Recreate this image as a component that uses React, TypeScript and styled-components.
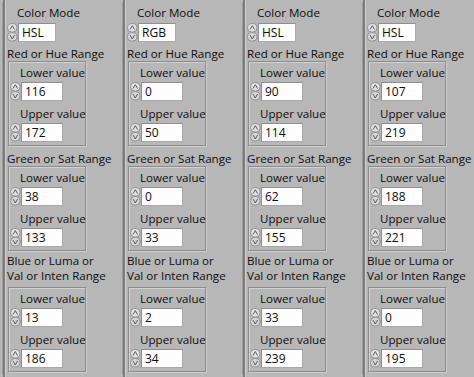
import React from "react";
import styled, { createGlobalStyle } from "styled-components";

const Global = createGlobalStyle`
  html, body { margin: 0; padding: 0; background: #b7b7b7; }
  body { font-family: "Open Sans", "Liberation Sans", Arial, sans-serif; color: #0e0e0e; }
`;

const Page = styled.div`
  width: 474px;
  height: 377px;
  overflow: hidden;
  background: #b7b7b7;
  display: flex;
  padding-left: 3px;
  box-sizing: border-box;
`;

const Column = styled.div`
  flex: 0 0 120px;
  width: 120px;
  box-sizing: border-box;
  border-left: 2px solid #7c7c7c;
  box-shadow: inset 1px 0 0 #d0d0d0, -3px 0 0 -2px #9a9a9a;
  padding-top: 6px;
  display: flex;
  flex-direction: column;
  overflow: hidden;
`;

const ModeLabel = styled.div`
  font-size: 11.6px;
  line-height: 14px;
  padding-left: 12px;
  white-space: nowrap;
`;

const SectionLabel = styled.div<{ $top: number }>`
  font-size: 11.6px;
  line-height: 15px;
  padding-left: 2px;
  margin-top: ${(p) => p.$top}px;
  white-space: nowrap;
`;

const Cluster = styled.div<{ $top: number }>`
  margin-top: ${(p) => p.$top}px;
  margin-left: 3px;
  width: 78px;
  height: 85px;
  box-sizing: border-box;
  border: 1px solid #8c8c8c;
  box-shadow: inset 1px 1px 0 #d2d2d2, 1px 1px 0 #cfcfcf;
  padding-top: 4px;
  display: flex;
  flex-direction: column;
`;

const ValueLabel = styled.div<{ $top: number }>`
  font-size: 11.6px;
  line-height: 14px;
  padding-left: 11px;
  margin-top: ${(p) => p.$top}px;
  white-space: nowrap;
`;

const NumRow = styled.div<{ $top: number; $left: number }>`
  display: flex;
  align-items: stretch;
  height: 19px;
  margin-top: ${(p) => p.$top}px;
  margin-left: ${(p) => p.$left}px;
`;

const Spin = styled.svg`
  width: 11px;
  height: 19px;
  flex: 0 0 11px;
  display: block;
`;

const Box = styled.div<{ $w: number }>`
  width: ${(p) => p.$w}px;
  height: 19px;
  box-sizing: border-box;
  background: #fdfdfd;
  border: 1px solid #a9a9a9;
  border-top-color: #8f8f8f;
  border-left-color: #8f8f8f;
  font-size: 12px;
  line-height: 17px;
  padding-left: 3px;
  font-family: "Open Sans", "Liberation Sans", Arial, sans-serif;
`;

function Spinner() {
  return (
    <Spin viewBox="0 0 11 19">
      <rect x="0.5" y="0.5" width="9.5" height="8.5" rx="4" fill="#e2e2e2" stroke="#939393" />
      <rect x="0.5" y="9.5" width="9.5" height="8.5" rx="4" fill="#d6d6d6" stroke="#939393" />
      <path d="M3 6.6 L5.3 2.6 L7.6 6.6" fill="none" stroke="#5a5a5a" strokeWidth="1" />
      <path d="M3 12 L5.3 16 L7.6 12" fill="none" stroke="#5a5a5a" strokeWidth="1" />
    </Spin>
  );
}

function Numeric({ value, w, top, left }: { value: string; w: number; top: number; left: number }) {
  return (
    <NumRow $top={top} $left={left}>
      <Spinner />
      <Box $w={w}>{value}</Box>
    </NumRow>
  );
}

function Range({ lo, hi, top }: { lo: string; hi: string; top: number }) {
  return (
    <Cluster $top={top}>
      <ValueLabel $top={0}>Lower value</ValueLabel>
      <Numeric value={lo} w={42} top={2} left={1} />
      <ValueLabel $top={6}>Upper value</ValueLabel>
      <Numeric value={hi} w={42} top={2} left={1} />
    </Cluster>
  );
}

type Item = { mode: string; r: [string, string]; g: [string, string]; b: [string, string] };

const items: Item[] = [
  { mode: "HSL", r: ["116", "172"], g: ["38", "133"], b: ["13", "186"] },
  { mode: "RGB", r: ["0", "50"], g: ["0", "33"], b: ["2", "34"] },
  { mode: "HSL", r: ["90", "114"], g: ["62", "155"], b: ["33", "239"] },
  { mode: "HSL", r: ["107", "219"], g: ["188", "221"], b: ["0", "195"] },
];

export default function App() {
  return (
    <>
      <Global />
      <Page>
        {items.map((it, i) => (
          <Column key={i}>
            <ModeLabel>Color Mode</ModeLabel>
            <Numeric value={it.mode} w={38} top={3} left={2} />
            <SectionLabel $top={4}>Red or Hue Range</SectionLabel>
            <Range lo={it.r[0]} hi={it.r[1]} top={0} />
            <SectionLabel $top={5}>Green or Sat Range</SectionLabel>
            <Range lo={it.g[0]} hi={it.g[1]} top={0} />
            <SectionLabel $top={2}>
              Blue or Luma or
              <br />
              Val or Inten Range
            </SectionLabel>
            <Range lo={it.b[0]} hi={it.b[1]} top={4} />
          </Column>
        ))}
      </Page>
    </>
  );
}
